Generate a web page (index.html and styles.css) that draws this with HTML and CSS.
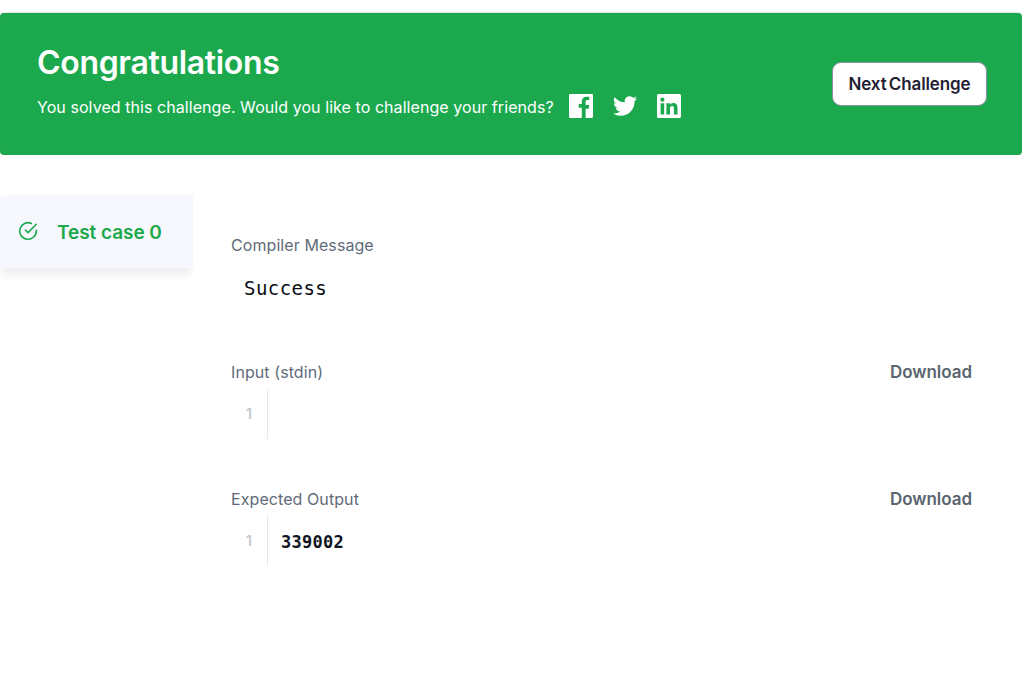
FILE: index.html
```html
<!DOCTYPE html>
<html lang="en">
<head>
<meta charset="utf-8">
<title>Congratulations</title>
<link rel="stylesheet" href="styles.css">
</head>
<body>
<header class="banner">
  <div class="banner-text">
    <h1 class="banner-title">Congratulations</h1>
    <div class="banner-row">
      <p class="banner-sub">You solved this challenge. Would you like to challenge your friends?</p>
      <div class="socials">
        <svg class="social" width="24" height="24" viewBox="0 0 24 24"><path fill="#fff" d="M1.200 0h21.600C23.500 0 24 .5 24 1.200v21.600c0 .7-.5 1.200-1.200 1.200h-6.200v-9.300h3.100l.5-3.600h-3.600V7.800c0-1 .3-1.800 1.800-1.800h1.900V2.800c-.3 0-1.500-.1-2.800-.1-2.800 0-4.700 1.700-4.700 4.800v2.600H9.700v3.600h3.100V24H1.200C.5 24 0 23.500 0 22.800V1.200C0 .5.500 0 1.200 0z"/></svg>
        <svg class="social" width="24" height="24" viewBox="0 0 24 24"><path fill="#fff" d="M24 4.560c-.88.39-1.830.65-2.830.77 1.020-.61 1.800-1.580 2.170-2.730-.95.560-2.010.97-3.130 1.190A4.930 4.930 0 0 0 16.620 2.240c-3.180 0-5.520 2.970-4.800 6.050A14 14 0 0 1 1.670 3.150 4.930 4.930 0 0 0 3.190 9.720a4.900 4.900 0 0 1-2.230-.62c-.05 2.280 1.580 4.410 3.950 4.890-.69.190-1.460.23-2.220.09a4.930 4.930 0 0 0 4.600 3.420A9.900 9.900 0 0 1 0 19.540a14 14 0 0 0 7.550 2.210c9.140 0 14.310-7.720 14-14.650.96-.69 1.800-1.560 2.450-2.540z"/></svg>
        <svg class="social" width="24" height="24" viewBox="0 0 24 24"><path fill="#fff" fill-rule="evenodd" d="M1.500 0h21C23.300 0 24 .7 24 1.500v21c0 .8-.7 1.500-1.500 1.500h-21C.7 24 0 23.300 0 22.500v-21C0 .7.700 0 1.500 0zM3.600 9.200v11.200h3.600V9.200zM5.400 3.600a2.080 2.080 0 1 0 0 4.160 2.080 2.080 0 0 0 0-4.160zM9.400 9.200v11.200H13v-5.600c0-1.500.3-2.900 2.100-2.900 1.800 0 1.800 1.700 1.800 3v5.500h3.600v-6.200c0-3-.7-5.300-4.200-5.300-1.700 0-2.800.9-3.300 1.800V9.200z"/></svg>
      </div>
    </div>
  </div>
  <button class="next-btn" type="button">Next Challenge</button>
</header>

<main class="results">
  <aside class="tabs">
    <div class="tab">
      <svg class="tab-icon" width="20" height="20" viewBox="0 0 20 20" fill="none" stroke="#1ba94c" stroke-width="1.600" stroke-linecap="round" stroke-linejoin="round"><path d="M18.300 9.200v.8a8.300 8.300 0 1 1-4.900-7.600"/><path d="M18.300 3.300 10 11.600 7.500 9.100"/></svg>
      <span class="tab-label">Test case 0</span>
    </div>
  </aside>
  <section class="detail">
    <div class="block block-compiler">
      <div class="block-head"><span class="block-label">Compiler Message</span></div>
      <pre class="compiler-msg">Success</pre>
    </div>
    <div class="block">
      <div class="block-head"><span class="block-label">Input (stdin)</span><a class="download">Download</a></div>
      <div class="code"><span class="gutter">1</span><span class="code-line"></span></div>
    </div>
    <div class="block">
      <div class="block-head"><span class="block-label">Expected Output</span><a class="download">Download</a></div>
      <div class="code"><span class="gutter">1</span><span class="code-line">339002</span></div>
    </div>
  </section>
</main>
</body>
</html>
```
FILE: styles.css
```css
* { box-sizing: border-box; }
html, body { margin: 0; padding: 0; background: #fff; overflow: hidden; }
body {
  height: 675px;
  padding-top: 13px;
  font-family: "Inter", "Liberation Sans", sans-serif;
}
.banner {
  height: 142px;
  background: #1ca94e;
  border-radius: 4px;
  box-shadow: 0 -1px 0 #e4e6ea;
  display: flex;
  align-items: center;
  justify-content: space-between;
  padding: 0 35px 0 37px;
}
.banner-text { padding-bottom: 6px; }
.banner-title {
  margin: 0 0 12px;
  font-size: 32px;
  line-height: 40px;
  font-weight: 600;
  letter-spacing: -0.33px;
  color: #fff;
}
.banner-row { display: flex; align-items: center; gap: 15px; }
.banner-sub { margin: 0; font-size: 16px; line-height: 24px; letter-spacing: 0.065px; color: #fff; }
.socials { display: flex; gap: 20px; margin-top: -2px; }
.social { display: block; }
.next-btn {
  width: 155px;
  height: 44px;
  background: #fff;
  border: 1px solid #8f8fa8;
  border-radius: 9px;
  font: 600 17px/24px "Inter", "Liberation Sans", sans-serif;
  letter-spacing: -0.1px;
  word-spacing: -2px;
  color: #1f2133;
  padding: 0;
}
.results { display: flex; margin-top: 40px; }
.tabs { width: 193px; flex: none; }
.tab {
  height: 73px;
  background: #f6f8fd;
  border-radius: 4px 0 0 4px;
  box-shadow: 0 8px 10px -2px rgba(60, 70, 90, .1);
  clip-path: inset(0 0 -30px 0);
  display: flex;
  align-items: center;
  padding-left: 18px;
  gap: 19px;
}
.tab-icon { display: block; flex: none; margin-top: -1px; }
.tab-label { font-size: 19px; font-weight: 600; letter-spacing: -0.05px; color: #1ba94c; margin-top: 2px; }
.detail { flex: 1; padding: 38px 50px 0 38px; }
.block { margin-bottom: 48px; }
.block-compiler { margin-bottom: 60px; }
.block-head {
  display: flex;
  justify-content: space-between;
  height: 24px;
  align-items: center;
}
.block-label { font-size: 16px; letter-spacing: 0.08px; color: #5f6b7a; }
.download { font-size: 17px; font-weight: 600; letter-spacing: -0.05px; color: #5b6670; }
.compiler-msg {
  margin: 19px 0 0 13px;
  font: 19px/24px "DejaVu Sans Mono", monospace;
  color: #0a0d12;
  letter-spacing: .45px;
}
.code { display: flex; height: 50px; margin-top: 5px; }
.gutter {
  width: 37px;
  flex: none;
  border-right: 1px solid #e6e8ea;
  font: 600 14px/50px "Inter", "Liberation Sans", sans-serif;
  color: #c3c8cc;
  text-align: right;
  padding-right: 15px;
}
.code-line {
  padding-left: 13px;
  font: 700 17px/52px "DejaVu Sans Mono", monospace;
  letter-spacing: .27px;
  color: #0e141e;
}
```
